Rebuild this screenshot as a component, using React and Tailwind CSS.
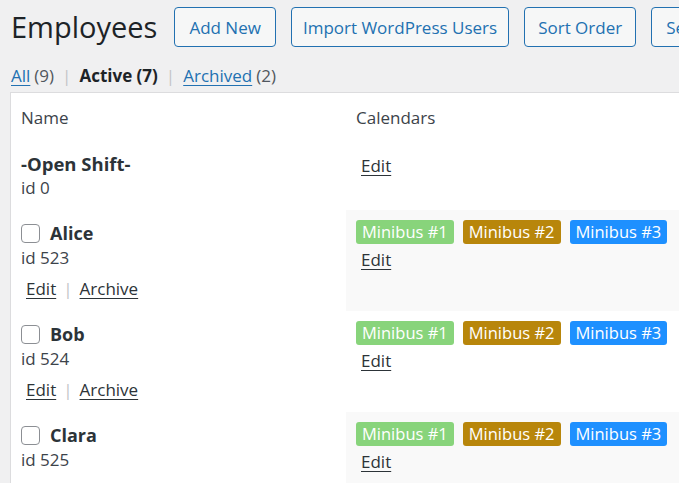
import React from "react";

const font = "font-['Segoe_UI','Open_Sans','Noto_Sans',sans-serif]";

function Btn({ children, px = "px-[14px]" }) {
  return (
    <button className={`h-[40px] shrink-0 ${px} rounded-[4px] border border-[#2271b1] bg-[#f6f7f7] text-[#2271b1] text-[17px] leading-none whitespace-nowrap`}>
      {children}
    </button>
  );
}

function Badge({ color, children }) {
  return (
    <span className={`inline-flex items-center h-[24px] px-[6px] rounded-[3px] text-white text-[16.5px] leading-none whitespace-nowrap ${color}`}>
      {children}
    </span>
  );
}

function Calendars() {
  return (
    <div className="flex flex-col">
      <div className="flex gap-[9px]">
        <Badge color="bg-[#88d47b]">Minibus #1</Badge>
        <Badge color="bg-[#b8860b]">Minibus #2</Badge>
        <Badge color="bg-[#1e90ff]">Minibus #3</Badge>
      </div>
      <div className="mt-[4px] ml-[5px] leading-[24px]">
        <a className="underline underline-offset-[3px] text-[#2c3338]">Edit</a>
      </div>
    </div>
  );
}

function Checkbox() {
  return <span className="inline-block w-[19px] h-[19px] rounded-[4px] border border-[#8c8f94] bg-white shrink-0" />;
}

function EmpRow({ name, id, striped }) {
  return (
    <div className="flex h-[101px]">
      <div className="w-[335px] shrink-0 bg-white pl-[10px] pt-[12px]">
        <div className="flex items-center gap-[10px] h-[23px]">
          <Checkbox />
          <span className="font-bold text-[#2c3338] text-[18px]">{name}</span>
        </div>
        <div className="leading-[24px] mt-[1px]">id {id}</div>
        <div className="mt-[7px] ml-[5px] flex items-center gap-[7px] leading-[24px]">
          <a className="underline underline-offset-[3px] text-[#2c3338]">Edit</a>
          <span className="text-[#c3c4c7]">|</span>
          <a className="underline underline-offset-[3px] text-[#2c3338]">Archive</a>
        </div>
      </div>
      <div className={`flex-1 pl-[10px] pt-[10px] ${striped ? "bg-[#f9f9f9]" : "bg-white"}`}>
        <Calendars />
      </div>
    </div>
  );
}

export default function App() {
  return (
    <div className={`w-[679px] h-[483px] overflow-hidden bg-[#f0f0f1] text-[#3c434a] text-[17px] ${font}`}>
      <div className="flex items-center pl-[11px] pt-[7px] gap-[15px]">
        <h1 className="text-[29px] leading-[40px] text-[#1d2327] mr-[2px] whitespace-nowrap">Employees</h1>
        <Btn>Add New</Btn>
        <Btn px="px-[11px]">Import WordPress Users</Btn>
        <Btn px="px-[13px]">Sort Order</Btn>
        <Btn>Settings</Btn>
      </div>
      <div className="pl-[11px] mt-[17px] flex items-center whitespace-nowrap leading-[24px] text-[#50575e]">
        <a className="underline underline-offset-[3px] text-[#2271b1]">All</a>
        <span className="ml-[4px]">(9)</span>
        <span className="mx-[8px] text-[#c3c4c7]">|</span>
        <span className="font-bold text-[#1d2327]">Active (7)</span>
        <span className="mx-[8px] text-[#c3c4c7]">|</span>
        <a className="underline underline-offset-[3px] text-[#2271b1]">Archived</a>
        <span className="ml-[4px]">(2)</span>
      </div>
      <div className="ml-[10px] mt-[4px] w-[800px] border-t border-l border-[#dcdcde] bg-white">
        <div className="flex h-[49px] items-center">
          <div className="w-[335px] pl-[10px]">Name</div>
          <div className="pl-[10px]">Calendars</div>
        </div>
        <div className="flex h-[68px]">
          <div className="w-[335px] pl-[10px] pt-[10px]">
            <div className="font-bold text-[#2c3338] text-[18.5px] leading-[24px]">-Open Shift-</div>
            <div className="leading-[24px]">id 0</div>
          </div>
          <div className="pl-[15px] pt-[12px] leading-[24px]">
            <a className="underline underline-offset-[3px] text-[#2c3338]">Edit</a>
          </div>
        </div>
        <EmpRow name="Alice" id="523" striped />
        <EmpRow name="Bob" id="524" />
        <EmpRow name="Clara" id="525" striped />
      </div>
    </div>
  );
}
